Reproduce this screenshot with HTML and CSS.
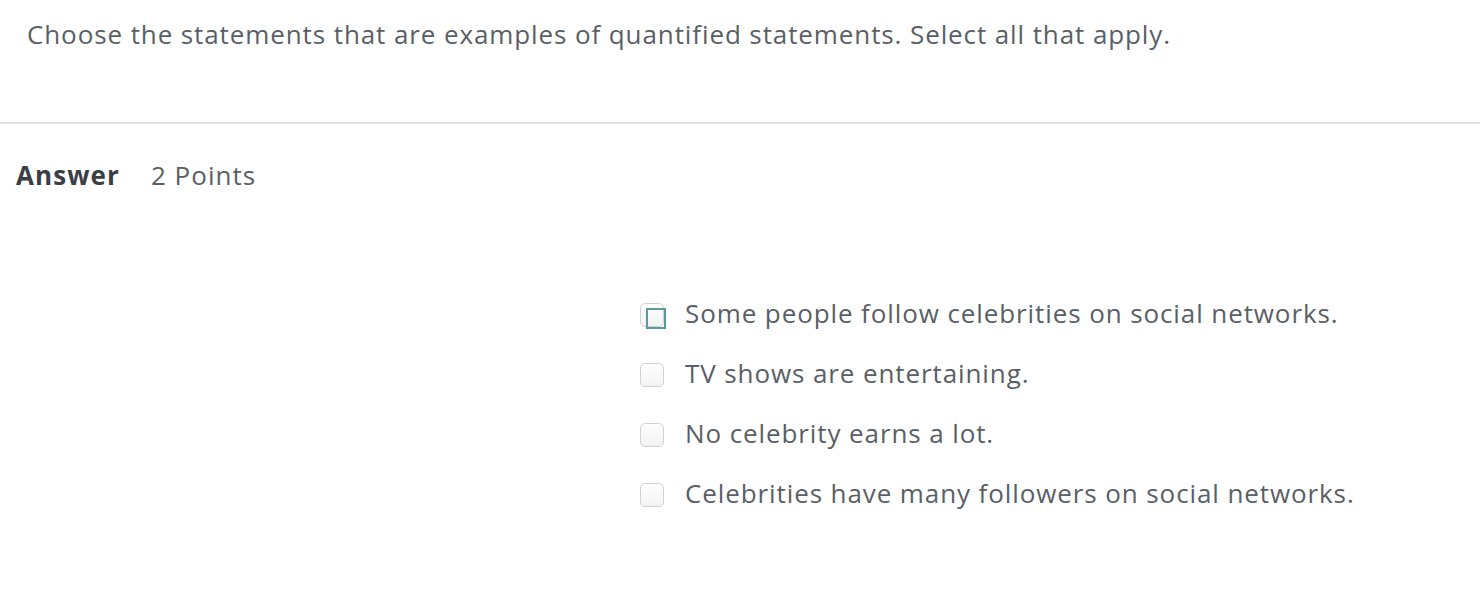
FILE: index.html
```html
<!DOCTYPE html>
<html>
<head>
<meta charset="utf-8">
<link rel="stylesheet" href="styles.css">
</head>
<body>
<div class="question">
  <p class="prompt">Choose the statements that are examples of quantified statements. Select all that apply.</p>
</div>
<div class="answer">
  <div class="answer-head">
    <span class="answer-label">Answer</span>
    <span class="points">2 Points</span>
  </div>
  <ul class="choices">
    <li class="choice"><span class="box focused"></span><span class="text">Some people follow celebrities on social networks.</span></li>
    <li class="choice"><span class="box"></span><span class="text">TV shows are entertaining.</span></li>
    <li class="choice"><span class="box"></span><span class="text">No celebrity earns a lot.</span></li>
    <li class="choice"><span class="box"></span><span class="text">Celebrities have many followers on social networks.</span></li>
  </ul>
</div>
</body>
</html>
```
FILE: styles.css
```css
html, body {
  margin: 0;
  padding: 0;
  background: #fff;
  font-family: "Open Sans", "Noto Sans", sans-serif;
  color: #5a5f66;
  letter-spacing: 0.9px;
}
.question {
  height: 124px;
  border-bottom: 2px solid #e0e0e0;
  box-sizing: border-box;
}
.prompt {
  margin: 0;
  padding: 16px 0 0 27px;
  font-size: 26px;
  line-height: 36px;
}
.answer-head {
  display: flex;
  align-items: baseline;
  padding: 33px 0 0 16px;
  gap: 31px;
}
.answer-label {
  font-weight: 700;
  font-size: 26px;
  color: #3b3f45;
  letter-spacing: 1.1px;
}
.points {
  font-size: 26px;
  letter-spacing: 1px;
}
.choices {
  list-style: none;
  margin: 0;
  padding: 90px 0 0 640px;
}
.choice {
  display: flex;
  align-items: center;
  height: 60px;
  gap: 21px;
}
.box {
  position: relative;
  width: 24px;
  height: 24px;
  box-sizing: border-box;
  border: 1px solid #d2d2d2;
  border-radius: 5px;
  background: linear-gradient(#fff, #f2f2f2);
  flex: none;
  margin-top: 3px;
}
.box.focused::after {
  content: "";
  position: absolute;
  left: 5px;
  top: 4px;
  width: 20px;
  height: 21px;
  box-sizing: border-box;
  border: 2px solid #5e9a9a;
}
.text {
  font-size: 26px;
}
```
